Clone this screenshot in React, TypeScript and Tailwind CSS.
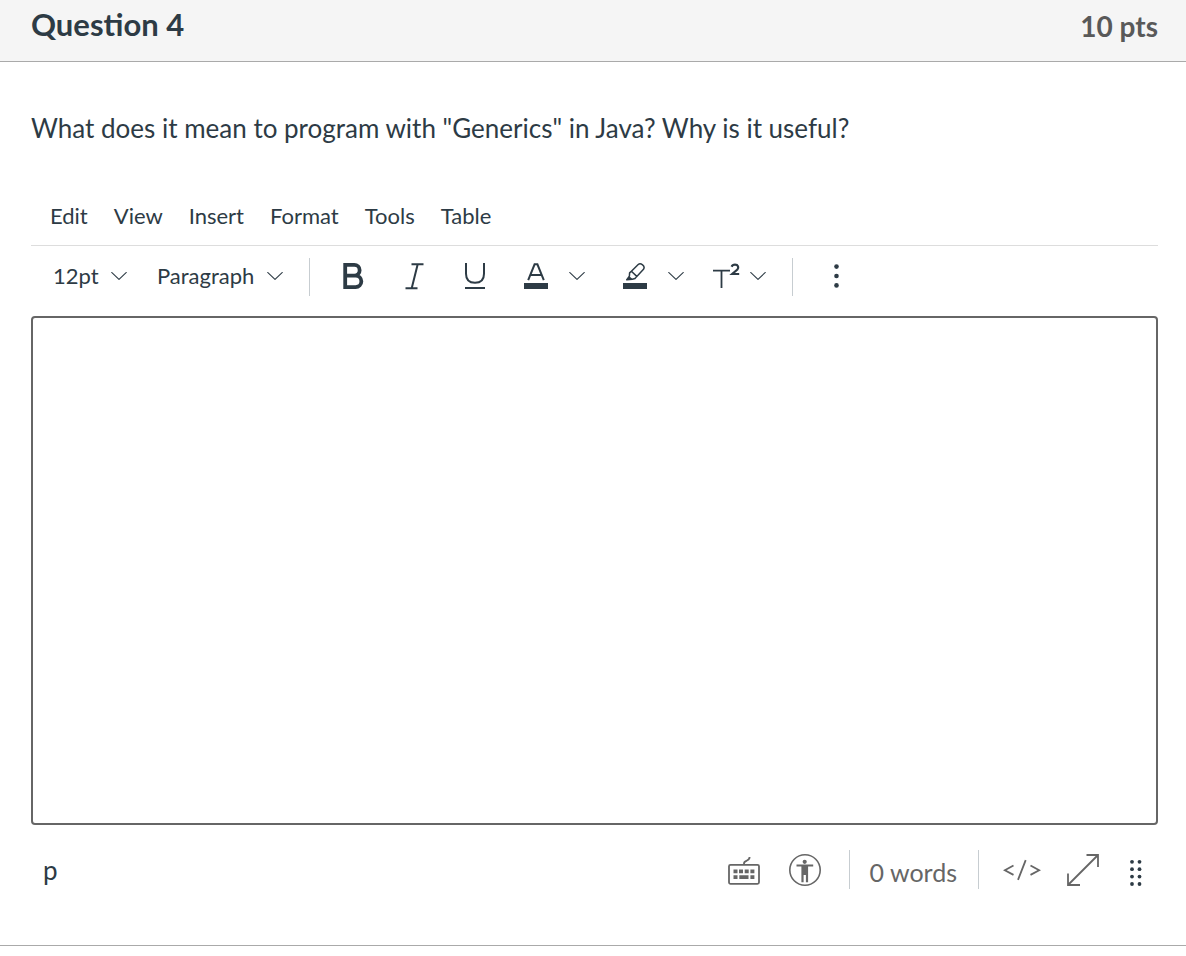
import React from "react";

function Chevron({ className = "" }: { className?: string }) {
  return (
    <svg className={`mb-0.5 h-2 w-4 shrink-0 ${className}`} viewBox="0 0 16 8" fill="none" stroke="currentColor" strokeWidth="1.1" aria-hidden="true">
      <path d="M.4.2 8 7.4 15.6.2" />
    </svg>
  );
}

function Icon({ children }: { children: React.ReactNode }) {
  return (
    <svg className="h-7 w-6 shrink-0" viewBox="0 0 24 28" fill="none" stroke="currentColor" strokeWidth="2" aria-hidden="true">
      {children}
    </svg>
  );
}

function ToolButton({ label, children }: { label: string; children: React.ReactNode }) {
  return (
    <button type="button" aria-label={label} className="flex h-full w-15 items-center justify-center">
      {children}
    </button>
  );
}

function SplitButton({ label, children }: { label: string; children: React.ReactNode }) {
  return (
    <div className="flex h-full w-[98px] items-center">
      <button type="button" aria-label={label} className="flex h-full w-[54px] items-center justify-end pr-3">
        {children}
      </button>
      <button type="button" aria-label={`${label} options`} className="flex h-full w-[34px] items-center justify-center">
        <Chevron />
      </button>
    </div>
  );
}

function Picker({ label, value, width }: { label: string; value: string; width: string }) {
  return (
    <div className={`relative flex h-full items-center ${width}`}>
      <select aria-label={label} defaultValue={value} className="h-full w-full appearance-none bg-transparent pb-0.5 text-[22px] leading-8">
        <option>{value}</option>
      </select>
      <Chevron className="pointer-events-none absolute right-0" />
    </div>
  );
}

function Divider({ className = "" }: { className?: string }) {
  return <div className={`w-px self-stretch bg-[#c7cdd1] ${className}`} />;
}

const menus = ["Edit", "View", "Insert", "Format", "Tools", "Table"];

export default function App() {
  return (
    <main className="border-b border-[#aaaaaa] bg-white font-['Lato',sans-serif] text-[#2d3b45]">
      <header className="flex items-start justify-between border-b border-[#aaaaaa] bg-[#f5f5f5] pt-1 pr-7 pb-[13px] pl-[31px] font-bold">
        <h1 className="text-[31px] leading-[41px]">Question 4</h1>
        <p className="text-[28px] leading-[44px] text-[#595959]">10 pts</p>
      </header>

      <section className="pt-[46px] pr-7 pb-14 pl-[31px]">
        <label htmlFor="answer" className="block text-[26px] leading-10">
          What does it mean to program with "Generics" in Java? Why is it useful?
        </label>

        <nav aria-label="Editor menu" className="mt-[52px] flex gap-[26px] border-b border-[#dddddd] pb-[13px] pl-[19px] text-[22px] leading-8">
          {menus.map((m) => (
            <button key={m} type="button">{m}</button>
          ))}
        </nav>

        <div role="toolbar" aria-label="Formatting" className="flex h-[70px] items-center pt-3 pb-5 pl-[22px]">
          <Picker label="Font size" value="12pt" width="w-[74px]" />
          <Picker label="Block style" value="Paragraph" width="ml-[30px] w-[126px]" />
          <Divider className="ml-[26px]" />
          <div className="ml-[13px] flex h-full gap-px">
            <ToolButton label="Bold">
              <Icon>
                <path strokeWidth="3.8" d="M4.2 1.9h9.1a5.3 5.3 0 0 1 0 10.7H4.2zM4.2 12.6h10.4a5.7 5.7 0 0 1 0 11.5H4.2z" />
              </Icon>
            </ToolButton>
            <ToolButton label="Italic">
              <Icon>
                <path d="M9.5 1.2h12M3.5 25.2h12M15.7 1.2 9.7 25.2" />
              </Icon>
            </ToolButton>
            <ToolButton label="Underline">
              <Icon>
                <path d="M3 0v10.8c0 5.7 3 9 9 9s9-3.3 9-9V0M2 25h20" />
              </Icon>
            </ToolButton>
            <SplitButton label="Text color">
              <Icon>
                <path d="M4.2 17.2 10.6 1.3h2.8l6.4 15.9M6.5 12h11" />
                <path fill="currentColor" stroke="none" d="M0 20h24v6H0z" />
              </Icon>
            </SplitButton>
            <SplitButton label="Background color">
              <Icon>
                <path strokeWidth="1.5" strokeLinejoin="round" d="M8.4 8.2 15.2 1.5c2.4-2 7.5 1.4 5.3 4.8l-6.7 7.1zM8.4 8.2 6.6 9.9l-.2 3.2L3.8 16.7l5.5-.4 2.7-.7 1.8-2.2" />
                <path fill="currentColor" stroke="none" d="M6.2 13.2 9.6 16 3 17.3zM0 20h24v6H0z" />
              </Icon>
            </SplitButton>
          </div>
          <div className="ml-[9px] flex h-full items-center">
            <button type="button" aria-label="Superscript" className="flex h-full items-center">
              <svg className="h-7 w-7" viewBox="0 0 28 28" fill="none" stroke="currentColor" strokeWidth="1.8" aria-hidden="true">
                <path d="M1 7.6h17M9.5 7.6V25" />
                <path strokeWidth="2.2" d="M19.6 3.7c.7-1.6 2-2.1 3.4-2.1 3.3 0 4 3 2.4 4.9L20.2 11h7" />
              </svg>
            </button>
            <button type="button" aria-label="Superscript options" className="flex h-full w-9 items-center justify-center">
              <Chevron />
            </button>
          </div>
          <Divider className="ml-4" />
          <button type="button" aria-label="More" className="ml-8 flex h-full items-center">
            <Icon>
              <g fill="currentColor" stroke="none">
                <circle cx="11.5" cy="3.6" r="2.3" />
                <circle cx="11.5" cy="13" r="2.3" />
                <circle cx="11.5" cy="22.4" r="2.3" />
              </g>
            </Icon>
          </button>
        </div>

        <textarea id="answer" rows={12} className="block min-h-[509px] w-full resize-none rounded border-2 border-[#666666] bg-white p-4 text-2xl outline-none" />

        <footer className="mt-[25px] flex h-[39px] items-center pr-4 pl-3 leading-8 text-[#666666]">
          <span className="mr-auto text-[26px] text-[#2d3b45]">p</span>
          <button type="button" aria-label="Keyboard shortcuts">
            <svg className="size-8" viewBox="0 0 32 32" fill="none" stroke="currentColor" strokeWidth="1.8" aria-hidden="true">
              <rect x="1" y="10.8" width="30" height="19" rx="1.5" />
              <path d="M16 11V9.5c0-2 1-2.3 3-3 2-.8 2.6-1.3 2.6-3.5" />
              <g fill="currentColor" stroke="none">
                <path d="M5.5 15.4h4v3.8h-4zM11 15.4h4v3.8h-4zM16.7 15.4h4v3.8h-4zM22.4 15.4h4v3.8h-4zM5.5 21.2h4V25h-4zM11.3 21.2h9.2V25h-9.2zM22.4 21.2h4V25h-4z" />
              </g>
            </svg>
          </button>
          <button type="button" aria-label="Accessibility checker" className="ml-[29px]">
            <svg className="size-8" viewBox="0 0 32 32" fill="none" stroke="currentColor" aria-hidden="true">
              <circle cx="16" cy="16" r="15.2" strokeWidth="1.6" />
              <g fill="currentColor" stroke="none">
                <circle cx="15.7" cy="7.8" r="2.1" />
                <path d="M7.5 10.5h16.7v2h-5.1v15.7h-2.2v-7.1h-2.3v7.1h-2.2V12.5H7.5z" />
              </g>
            </svg>
          </button>
          <Divider className="ml-7" />
          <button type="button" className="ml-5 pt-1 text-[25px]">0 words</button>
          <Divider className="ml-[21px]" />
          <button type="button" aria-label="HTML editor" className="ml-6">
            <svg className="h-8 w-[38px]" viewBox="0 0 38 32" fill="none" stroke="currentColor" strokeWidth="1.8" aria-hidden="true">
              <path d="M10.5 11.5 1.8 16.2l8.7 4.7M27.5 11.5l8.7 4.7-8.7 4.7M22.7 6.2 15 25.8" />
            </svg>
          </button>
          <button type="button" aria-label="Fullscreen" className="ml-[26px]">
            <svg className="size-8" viewBox="0 0 32 32" fill="none" stroke="currentColor" strokeWidth="1.8" aria-hidden="true">
              <path d="M19.5 1H31v12M1 19.5V31h12M31 1 1 31" />
            </svg>
          </button>
          <button type="button" aria-label="Resize editor" className="ml-[31px] text-[#2d3b45]">
            <svg className="h-8 w-3" viewBox="0 0 12 32" fill="currentColor" aria-hidden="true">
              {[8.8, 16.2, 23.6, 31].map((y) => (
                <g key={y}>
                  <circle cx="2" cy={y - 1} r="1.9" />
                  <circle cx="9.5" cy={y - 1} r="1.9" />
                </g>
              ))}
            </svg>
          </button>
        </footer>
      </section>
    </main>
  );
}
